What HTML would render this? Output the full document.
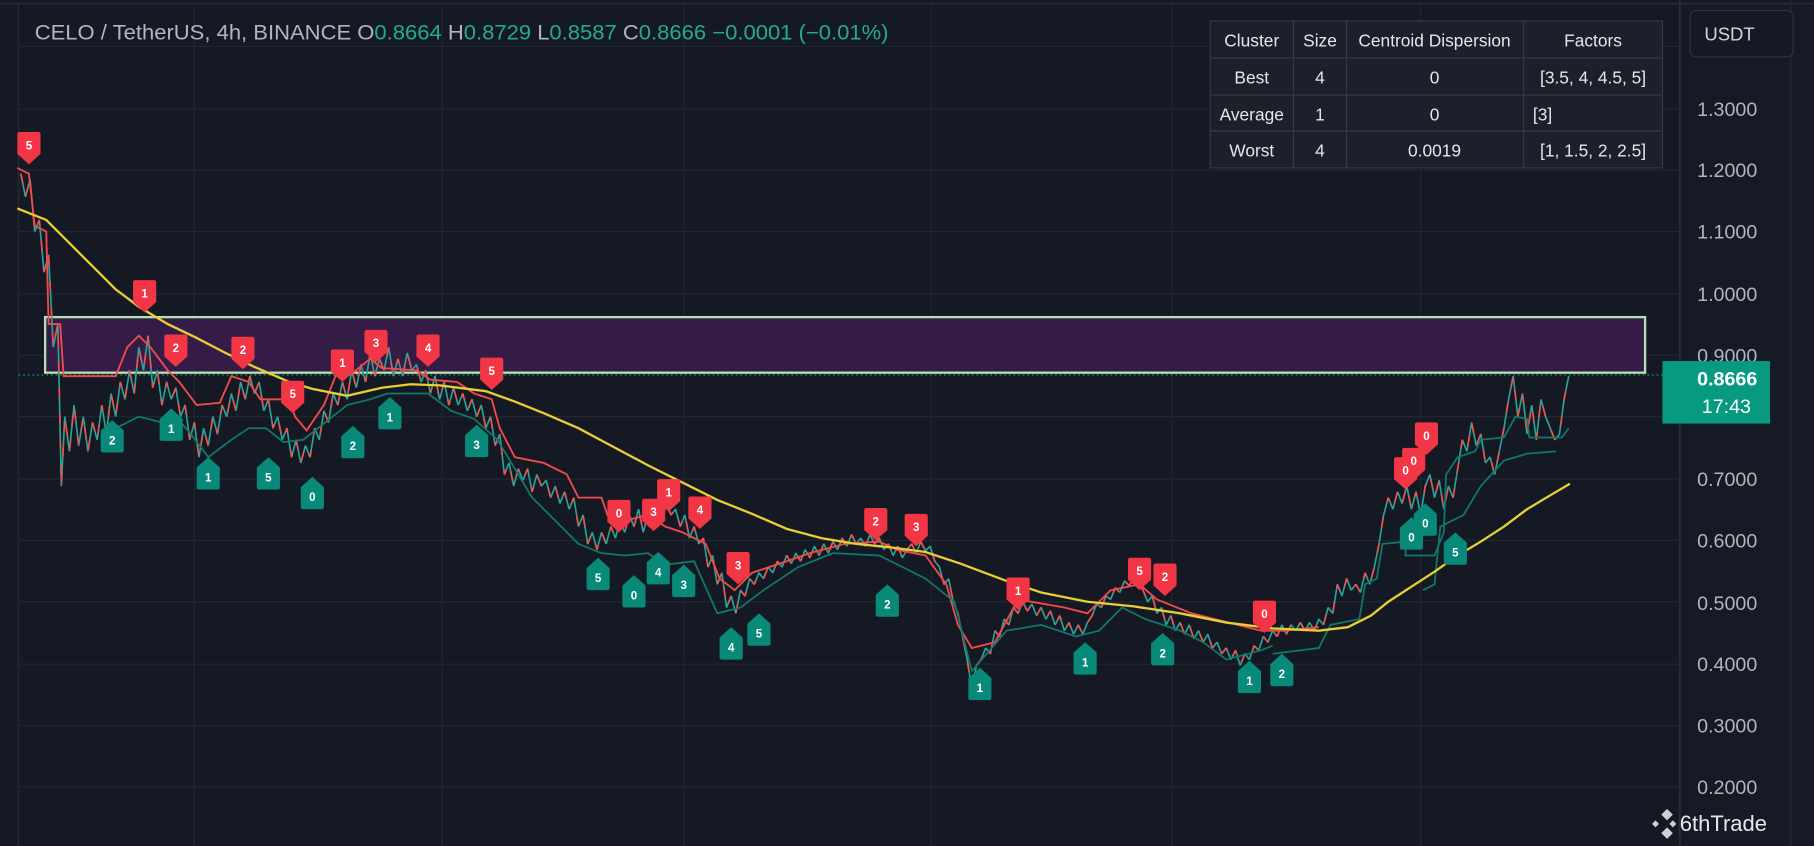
<!DOCTYPE html>
<html><head><meta charset="utf-8"><style>
html,body{margin:0;padding:0;background:#151924;overflow:hidden}
svg{display:block}
text{font-family:"Liberation Sans","DejaVu Sans",sans-serif}
</style></head><body>
<svg width="1814" height="846" viewBox="0 0 1568 731" xmlns="http://www.w3.org/2000/svg">
<defs>
<path id="rp" d="M-10,2q0,-2 2,-2h16q2,0 2,2v17l-10,9l-10,-9z" fill="#f23645"/>
<path id="gp" d="M0,-5l10,9v17q0,2 -2,2h-16q-2,0 -2,-2v-17z" fill="#08897a"/>
<polyline id="pr" points="18,150 22,170 26,155 30,200 34,190 38,235 42,220 46,300 50,280 53,420 56,360 60,390 64,350 68,385 72,360 76,390 80,365 84,380 88,350 92,375 96,340 100,360 104,330 108,345 112,320 116,340 120,300 124,320 128,290 132,335 136,320 140,350 144,330 148,345 152,335 156,360 160,350 164,380 168,365 172,395 176,370 180,385 184,360 188,375 192,350 196,360 200,340 204,355 208,330 212,345 216,325 220,340 224,330 228,355 232,345 236,370 240,360 244,380 248,370 252,395 256,380 260,400 264,385 268,395 272,370 276,380 280,355 284,365 288,340 292,350 296,330 300,345 304,320 308,335 312,315 316,330 320,305 324,325 328,310 332,320 336,300 340,325 344,310 348,325 352,305 356,320 360,315 364,330 368,320 372,340 376,325 380,345 384,330 388,350 392,335 396,350 400,340 404,355 408,345 412,360 416,350 420,370 424,360 428,385 432,375 436,410 440,400 444,420 448,405 452,415 456,405 460,425 464,410 468,420 472,415 476,430 480,420 484,435 488,425 492,440 496,430 500,455 504,445 508,470 512,460 516,475 520,460 524,470 528,455 532,465 536,450 540,460 544,445 548,455 552,440 556,460 560,445 564,455 568,440 572,450 576,435 580,445 584,440 588,455 592,445 596,465 600,455 604,470 608,465 612,490 616,480 620,505 624,495 628,525 632,515 636,530 640,510 644,515 648,500 652,505 656,495 660,500 664,490 668,495 672,485 676,490 680,480 684,487 688,478 692,485 696,475 700,482 704,472 708,480 712,470 716,478 720,468 724,475 728,465 732,472 736,462 740,470 744,465 748,472 752,462 756,470 760,465 764,475 768,470 772,480 776,472 780,482 784,475 788,470 792,478 796,468 800,476 804,472 808,485 812,490 816,505 820,500 824,520 828,530 832,550 836,570 840,595 844,575 848,570 852,560 856,565 860,545 864,550 868,535 872,540 876,525 880,530 884,520 888,528 892,522 896,532 900,525 904,535 908,528 912,540 916,532 920,545 924,538 928,548 932,540 936,548 940,538 944,532 948,522 952,525 956,515 960,518 964,508 968,512 972,502 976,506 980,500 984,505 988,510 992,520 996,515 1000,530 1004,525 1008,540 1012,532 1016,545 1020,538 1024,548 1028,540 1032,552 1036,545 1040,555 1044,548 1048,560 1052,555 1056,565 1060,560 1064,570 1068,562 1072,575 1076,565 1080,570 1084,558 1088,562 1092,550 1096,555 1100,545 1104,550 1108,540 1112,548 1116,540 1120,545 1124,538 1128,545 1132,538 1136,545 1140,535 1144,540 1148,525 1152,530 1156,505 1160,515 1164,500 1168,510 1172,505 1176,512 1180,495 1184,505 1188,490 1192,470 1196,445 1200,430 1204,440 1208,425 1212,435 1216,420 1220,440 1224,425 1228,445 1232,420 1236,410 1240,430 1244,415 1248,440 1252,420 1256,430 1260,405 1264,380 1268,390 1272,365 1276,385 1280,375 1284,400 1288,395 1292,410 1296,390 1300,370 1304,345 1308,325 1312,360 1316,340 1320,375 1324,350 1328,380 1332,345 1336,360 1340,370 1344,380 1348,375 1352,345 1356,325"/>
</defs>
<rect width="1568" height="731" fill="#151924"/>
<rect x="1452" y="0" width="116" height="731" fill="#161a25"/>
<line x1="1452" y1="0" x2="1452" y2="731" stroke="#2a2e39" stroke-width="1.5"/>
<line x1="1548" y1="0" x2="1548" y2="731" stroke="#1f2330" stroke-width="2"/>
<line x1="0" y1="3" x2="1568" y2="3" stroke="#232734" stroke-width="2"/>
<line x1="16" y1="3" x2="16" y2="731" stroke="#232734" stroke-width="1.5"/>
<g stroke="#222633" stroke-width="1">
<line x1="168" y1="3" x2="168" y2="731"/><line x1="382" y1="3" x2="382" y2="731"/>
<line x1="591" y1="3" x2="591" y2="731"/><line x1="805" y1="3" x2="805" y2="731"/>
<line x1="1013" y1="3" x2="1013" y2="731"/><line x1="1228" y1="3" x2="1228" y2="731"/>
<line x1="16" y1="40" x2="1452" y2="40"/><line x1="16" y1="94" x2="1452" y2="94"/>
<line x1="16" y1="147" x2="1452" y2="147"/><line x1="16" y1="200" x2="1452" y2="200"/>
<line x1="16" y1="254" x2="1452" y2="254"/><line x1="16" y1="307" x2="1452" y2="307"/>
<line x1="16" y1="360" x2="1452" y2="360"/><line x1="16" y1="414" x2="1452" y2="414"/>
<line x1="16" y1="467" x2="1452" y2="467"/><line x1="16" y1="520" x2="1452" y2="520"/>
<line x1="16" y1="574" x2="1452" y2="574"/><line x1="16" y1="627" x2="1452" y2="627"/>
<line x1="16" y1="680" x2="1452" y2="680"/>
</g>
<rect x="39" y="274" width="1383" height="48" fill="#341c47" stroke="#b5e0b0" stroke-width="2"/>
<line x1="16" y1="324" x2="1452" y2="324" stroke="#1d8f7f" stroke-width="1" stroke-dasharray="1.5 2.5"/>
<g fill="none" stroke-width="1.4" stroke-linejoin="bevel">
<use href="#pr" stroke="#26a69a"/>
<use href="#pr" stroke="#ef5350" stroke-dasharray="9 13"/>
</g>
<polyline fill="none" stroke="#0f7a6c" stroke-width="1.5" points="1100,565 1140,560 1150,540 1175,535 1180,505 1190,500 1195,470 1215,468 1215,480 1240,480 1248,460 1250,410 1260,395 1275,390 1280,380 1300,378 1310,360 1320,362 1322,378 1350,378 1356,370"/>
<polyline fill="none" stroke="#0f7a6c" stroke-width="1.5" points="1230,510 1240,505 1245,455 1265,445 1280,420 1300,398 1320,392 1345,390"/>
<polyline fill="none" stroke="#f04b4b" stroke-width="1.6" points="15,145 25,150 30,195 40,200 42,280 52,280 55,325 100,325 110,300 120,290 130,300 145,320 155,330 170,350 190,348 200,325 215,330 225,345 250,345 255,360 265,372 280,350 290,325 305,322 320,310 330,318 360,320 372,328 395,330 410,340 425,345 432,370 445,395 470,400 490,410 500,430 520,430 525,445 540,450 560,445 575,455 590,460 610,470 622,500 635,510 650,495 680,485 700,478 730,470 760,468 775,475 800,480 818,505 828,540 840,560 860,555 880,518 920,525 940,530 960,510 985,505 1000,518 1030,530 1070,540 1090,545 1110,545 1140,542"/>
<polyline fill="none" stroke="#0f7a6c" stroke-width="1.5" points="90,380 100,370 120,360 140,365 150,358 165,375 180,395 200,380 215,370 230,370 245,382 262,380 275,370 300,350 320,345 335,340 350,340 370,340 390,355 410,362 430,380 460,430 500,470 520,478 540,480 560,478 575,488 600,485 620,530 640,525 660,510 690,490 720,478 760,480 780,490 800,500 825,520 840,580 870,545 900,540 930,550 950,545 970,525 990,535 1020,545 1040,555 1060,570 1090,562 1100,558"/>
<polyline fill="none" stroke="#e7cf35" stroke-width="2" points="15,180 40,190 60,210 80,230 100,250 120,265 145,280 170,292 195,305 220,317 250,330 270,336 300,342 330,335 355,332 380,333 420,338 445,347 470,357 500,370 530,386 560,402 590,417 620,432 650,444 680,457 710,465 740,470 770,473 800,477 830,487 870,502 900,512 940,520 980,524 1020,530 1060,538 1100,543 1140,545 1165,542 1185,532 1200,520 1220,507 1240,494 1260,480 1280,468 1300,455 1320,440 1340,428 1357,418"/>
<g>
<use href="#rp" x="25" y="114"/><use href="#rp" x="125" y="242"/><use href="#rp" x="152" y="289"/><use href="#rp" x="210" y="291"/><use href="#rp" x="253" y="329"/><use href="#rp" x="296" y="302"/><use href="#rp" x="325" y="285"/><use href="#rp" x="370" y="289"/><use href="#rp" x="425" y="309"/><use href="#rp" x="535" y="432"/><use href="#rp" x="565" y="431"/><use href="#rp" x="578" y="414"/><use href="#rp" x="605" y="429"/><use href="#rp" x="638" y="477"/><use href="#rp" x="757" y="439"/><use href="#rp" x="792" y="444"/><use href="#rp" x="880" y="499"/><use href="#rp" x="985" y="482"/><use href="#rp" x="1007" y="487"/><use href="#rp" x="1093" y="519"/><use href="#rp" x="1215" y="395"/><use href="#rp" x="1222" y="387"/><use href="#rp" x="1233" y="365"/>
<use href="#gp" x="97" y="368"/><use href="#gp" x="148" y="358"/><use href="#gp" x="180" y="400"/><use href="#gp" x="232" y="400"/><use href="#gp" x="270" y="417"/><use href="#gp" x="305" y="373"/><use href="#gp" x="337" y="348"/><use href="#gp" x="412" y="372"/><use href="#gp" x="517" y="487"/><use href="#gp" x="548" y="502"/><use href="#gp" x="569" y="482"/><use href="#gp" x="591" y="493"/><use href="#gp" x="632" y="547"/><use href="#gp" x="656" y="535"/><use href="#gp" x="767" y="510"/><use href="#gp" x="847" y="582"/><use href="#gp" x="938" y="560"/><use href="#gp" x="1005" y="552"/><use href="#gp" x="1080" y="576"/><use href="#gp" x="1108" y="570"/><use href="#gp" x="1220" y="452"/><use href="#gp" x="1232" y="440"/><use href="#gp" x="1258" y="465"/>
</g>
<g font-size="10" font-weight="bold" text-anchor="middle" fill="#fff">
<text x="25" y="129">5</text><text x="125" y="257">1</text><text x="152" y="304">2</text><text x="210" y="306">2</text><text x="253" y="344">5</text><text x="296" y="317">1</text><text x="325" y="300">3</text><text x="370" y="304">4</text><text x="425" y="324">5</text><text x="535" y="447">0</text><text x="565" y="446">3</text><text x="578" y="429">1</text><text x="605" y="444">4</text><text x="638" y="492">3</text><text x="757" y="454">2</text><text x="792" y="459">3</text><text x="880" y="514">1</text><text x="985" y="497">5</text><text x="1007" y="502">2</text><text x="1093" y="534">0</text><text x="1215" y="410">0</text><text x="1222" y="402">0</text><text x="1233" y="380">0</text>
<text x="97" y="384">2</text><text x="148" y="374">1</text><text x="180" y="416">1</text><text x="232" y="416">5</text><text x="270" y="433">0</text><text x="305" y="389">2</text><text x="337" y="364">1</text><text x="412" y="388">3</text><text x="517" y="503">5</text><text x="548" y="518">0</text><text x="569" y="498">4</text><text x="591" y="509">3</text><text x="632" y="563">4</text><text x="656" y="551">5</text><text x="767" y="526">2</text><text x="847" y="598">1</text><text x="938" y="576">1</text><text x="1005" y="568">2</text><text x="1080" y="592">1</text><text x="1108" y="586">2</text><text x="1220" y="468">0</text><text x="1232" y="456">0</text><text x="1258" y="481">5</text>
</g>
<text x="30" y="34" font-size="18" fill="#b2b5be" textLength="738" lengthAdjust="spacingAndGlyphs">CELO / TetherUS, 4h, BINANCE  O<tspan fill="#22ab94">0.8664</tspan>  H<tspan fill="#22ab94">0.8729</tspan>  L<tspan fill="#22ab94">0.8587</tspan>  C<tspan fill="#22ab94">0.8666</tspan>  <tspan fill="#22ab94">−0.0001 (−0.01%)</tspan></text>
<g font-size="15" fill="#e6e6ea" text-anchor="middle">
<rect x="1046" y="18" width="391" height="127" fill="#1c202b" stroke="#353a47"/>
<g stroke="#353a47"><line x1="1118" y1="18" x2="1118" y2="145"/><line x1="1164" y1="18" x2="1164" y2="145"/><line x1="1317" y1="18" x2="1317" y2="145"/>
<line x1="1046" y1="50" x2="1437" y2="50"/><line x1="1046" y1="82" x2="1437" y2="82"/><line x1="1046" y1="113" x2="1437" y2="113"/></g>
<text x="1082" y="40">Cluster</text><text x="1141" y="40">Size</text><text x="1240" y="40">Centroid Dispersion</text><text x="1377" y="40">Factors</text>
<text x="1082" y="72">Best</text><text x="1141" y="72">4</text><text x="1240" y="72">0</text><text x="1377" y="72">[3.5, 4, 4.5, 5]</text>
<text x="1082" y="104">Average</text><text x="1141" y="104">1</text><text x="1240" y="104">0</text><text x="1325" y="104" text-anchor="start">[3]</text>
<text x="1082" y="135">Worst</text><text x="1141" y="135">4</text><text x="1240" y="135">0.0019</text><text x="1377" y="135">[1, 1.5, 2, 2.5]</text>
</g>
<rect x="1461" y="9" width="89" height="40" rx="5" fill="#151924" stroke="#2f3441"/>
<text x="1495" y="35" font-size="16" fill="#d1d4dc" text-anchor="middle">USDT</text>
<g font-size="17" fill="#b2b5be">
<text x="1467" y="100">1.3000</text><text x="1467" y="153">1.2000</text><text x="1467" y="206">1.1000</text>
<text x="1467" y="260">1.0000</text><text x="1467" y="313">0.9000</text><text x="1467" y="420">0.7000</text>
<text x="1467" y="473">0.6000</text><text x="1467" y="527">0.5000</text><text x="1467" y="580">0.4000</text>
<text x="1467" y="633">0.3000</text><text x="1467" y="686">0.2000</text>
</g>
<rect x="1437" y="312" width="93" height="54" fill="#089981"/>
<text x="1467" y="333" font-size="17" fill="#fff" font-weight="bold">0.8666</text>
<text x="1471" y="357" font-size="17" fill="#fff">17:43</text>
<g fill="#d0d0d0"><path d="M1436,704 l5,-5 5,5 -5,5z M1428,712 l3,-3 3,3 -3,3z M1443,712 l3,-3 3,3 -3,3z M1436,720 l5,-5 5,5 -5,5z"/></g>
<text x="1452" y="718" font-size="19" fill="#e8e8e8">6thTrade</text>
</svg>
</body></html>
